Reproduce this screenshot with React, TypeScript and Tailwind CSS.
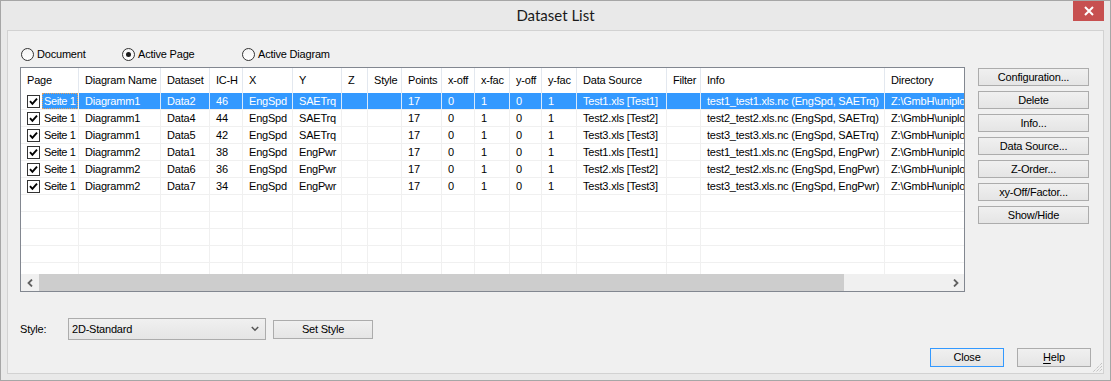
import React from "react";

type Col = { title: string; w: string };

const cols: Col[] = [
  { title: "Page", w: "w-[58px]" },
  { title: "Diagram Name", w: "w-[82px]" },
  { title: "Dataset", w: "w-[49px]" },
  { title: "IC-H", w: "w-[33px]" },
  { title: "X", w: "w-[50px]" },
  { title: "Y", w: "w-[49px]" },
  { title: "Z", w: "w-[26px]" },
  { title: "Style", w: "w-[34px]" },
  { title: "Points", w: "w-[40px]" },
  { title: "x-off", w: "w-[33px]" },
  { title: "x-fac", w: "w-[35px]" },
  { title: "y-off", w: "w-[32px]" },
  { title: "y-fac", w: "w-[35px]" },
  { title: "Data Source", w: "w-[90px]" },
  { title: "Filter", w: "w-[34px]" },
  { title: "Info", w: "w-[184px]" },
  { title: "Directory", w: "w-[130px]" },
];

const rows: string[][] = [
  ["Seite 1", "Diagramm1", "Data2", "46", "EngSpd", "SAETrq", "", "", "17", "0", "1", "0", "1", "Test1.xls [Test1]", "", "test1_test1.xls.nc (EngSpd, SAETrq)", "Z:\\GmbH\\uniplot\\data"],
  ["Seite 1", "Diagramm1", "Data4", "44", "EngSpd", "SAETrq", "", "", "17", "0", "1", "0", "1", "Test2.xls [Test2]", "", "test2_test2.xls.nc (EngSpd, SAETrq)", "Z:\\GmbH\\uniplot\\data"],
  ["Seite 1", "Diagramm1", "Data5", "42", "EngSpd", "SAETrq", "", "", "17", "0", "1", "0", "1", "Test3.xls [Test3]", "", "test3_test3.xls.nc (EngSpd, SAETrq)", "Z:\\GmbH\\uniplot\\data"],
  ["Seite 1", "Diagramm2", "Data1", "38", "EngSpd", "EngPwr", "", "", "17", "0", "1", "0", "1", "Test1.xls [Test1]", "", "test1_test1.xls.nc (EngSpd, EngPwr)", "Z:\\GmbH\\uniplot\\data"],
  ["Seite 1", "Diagramm2", "Data6", "36", "EngSpd", "EngPwr", "", "", "17", "0", "1", "0", "1", "Test2.xls [Test2]", "", "test2_test2.xls.nc (EngSpd, EngPwr)", "Z:\\GmbH\\uniplot\\data"],
  ["Seite 1", "Diagramm2", "Data7", "34", "EngSpd", "EngPwr", "", "", "17", "0", "1", "0", "1", "Test3.xls [Test3]", "", "test3_test3.xls.nc (EngSpd, EngPwr)", "Z:\\GmbH\\uniplot\\data"],
];

const rightButtons = ["Configuration...", "Delete", "Info...", "Data Source...", "Z-Order...", "xy-Off/Factor...", "Show/Hide"];

function Radio({ label, checked }: { label: string; checked?: boolean }) {
  return (
    <div className="flex items-center gap-[3px]">
      <div className="w-[13px] h-[13px] rounded-full border border-[#333333] bg-gradient-to-b from-[#f4f4f4] to-[#ffffff] flex items-center justify-center">
        {checked && <div className="w-[5px] h-[5px] rounded-full bg-[#1a1a1a]" />}
      </div>
      <span>{label}</span>
    </div>
  );
}

function Check() {
  return (
    <div className="w-[13px] h-[13px] border border-[#333333] bg-white flex items-center justify-center shrink-0">
      <svg width="9" height="9" viewBox="0 0 9 9">
        <path d="M1 4.2 L3.4 6.8 L8 1.6" fill="none" stroke="#000" strokeWidth="1.9" />
      </svg>
    </div>
  );
}

function Btn({ label, className = "" }: { label: React.ReactNode; className?: string }) {
  return (
    <div
      className={`flex items-center justify-center border bg-gradient-to-b from-[#f0f0f0] to-[#e5e5e5] ${className}`}
    >
      {label}
    </div>
  );
}

function Table() {
  return (
    <div className="w-[945px] h-[225px] border border-[#828790] bg-white flex flex-col overflow-hidden">
      {/* header */}
      <div className="flex h-[25px] shrink-0">
        {cols.map((c) => (
          <div key={c.title} className={`${c.w} shrink-0 border-r border-[#e3e8ef] pl-[6px] flex items-center whitespace-nowrap`}>
            {c.title}
          </div>
        ))}
      </div>

      {/* rows */}
      <div className="h-[181px] overflow-hidden">
        {rows.map((r, ri) => {
          const sel = ri === 0;
          return (
            <div key={ri} className="flex h-[17px] border-b border-[#f0f0f0]">
              {r.map((v, ci) =>
                ci === 0 ? (
                  <div key={ci} className={`${cols[ci].w} shrink-0 border-r border-[#f0f0f0] flex items-center pl-[6px]`}>
                    <Check />
                    <div
                      className={`ml-[2px] h-full flex-1 flex items-center pl-[2px] whitespace-nowrap tracking-[-0.4px] ${
                        sel ? "bg-[#3399ff] text-white outline-1 outline-dotted outline-[#e0a060] -outline-offset-1" : ""
                      }`}
                    >
                      {v}
                    </div>
                  </div>
                ) : (
                  <div
                    key={ci}
                    className={`${cols[ci].w} shrink-0 border-r pl-[6px] flex items-center whitespace-nowrap overflow-hidden ${
                      sel ? "bg-[#3399ff] text-white border-[#d8e9fb]" : "border-[#f0f0f0]"
                    }`}
                  >
                    {v}
                  </div>
                )
              )}
            </div>
          );
        })}
        {Array.from({ length: 5 }).map((_, i) => (
          <div key={i} className="flex h-[17px] border-b border-[#f0f0f0]">
            {cols.map((c) => (
              <div key={c.title} className={`${c.w} shrink-0 border-r border-[#f0f0f0]`} />
            ))}
          </div>
        ))}
      </div>

      {/* horizontal scrollbar */}
      <div className="flex h-[17px] bg-[#f0f0f0] shrink-0">
        <div className="w-[18px] flex items-center justify-center">
          <svg width="6" height="8" viewBox="0 0 6 8">
            <path d="M5 0.5 L1.5 4 L5 7.5" fill="none" stroke="#606060" strokeWidth="1.8" />
          </svg>
        </div>
        <div className="w-[805px] bg-[#cdcdcd]" />
        <div className="flex-1" />
        <div className="w-[17px] flex items-center justify-center">
          <svg width="6" height="8" viewBox="0 0 6 8">
            <path d="M1 0.5 L4.5 4 L1 7.5" fill="none" stroke="#606060" strokeWidth="1.8" />
          </svg>
        </div>
      </div>
    </div>
  );
}

export default function App() {
  return (
    <div className="w-[1111px] h-[381px] bg-[#e9e9e9] border border-[#a6a6a6] flex flex-col text-[11px] text-black tracking-[-0.2px] font-['Liberation_Sans',Arial,sans-serif]">
      {/* title bar */}
      <div className="h-[29px] shrink-0 flex items-start relative">
        <div className="flex-1 h-full flex items-center justify-center text-[15px] tracking-normal text-[#1a1a1a] font-['Segoe_UI',Lato,'Noto_Sans',sans-serif]">
          Dataset List
        </div>
        <div className="absolute right-[6px] top-0 w-[31px] h-[20px] bg-[#c75050] flex items-center justify-center">
          <svg width="10" height="10" viewBox="0 0 10 10">
            <path d="M1 1 L9 9 M9 1 L1 9" stroke="#fff" strokeWidth="2" />
          </svg>
        </div>
      </div>

      {/* client area */}
      <div className="ml-[6px] w-[1097px] h-[344px] border border-[#d2d2d2] bg-[#f0f0f0] relative flex flex-col">
        <div className="h-[36px] pt-[10px] pl-[13px] flex items-center">
          <div className="w-[101px]">
            <Radio label="Document" />
          </div>
          <div className="w-[120px]">
            <Radio label="Active Page" checked />
          </div>
          <Radio label="Active Diagram" />
        </div>

        <div className="flex pl-[12px]">
          <Table />
          <div className="ml-[13px] mt-[1px] flex flex-col gap-[5px]">
            {rightButtons.map((b) => (
              <Btn key={b} label={b} className="w-[111px] h-[18px] border-[#acacac]" />
            ))}
          </div>
        </div>

        <div className="flex items-center pl-[12px] mt-[26px] h-[22px]">
          <div className="w-[48px]">Style:</div>
          <div className="w-[198px] h-[22px] border border-[#acacac] bg-gradient-to-b from-[#f0f0f0] to-[#e5e5e5] flex items-center pl-[3px] pr-[6px]">
            <span className="flex-1">2D-Standard</span>
            <svg width="8" height="6" viewBox="0 0 8 6">
              <path d="M0.8 1 L4 4.2 L7.2 1" fill="none" stroke="#555" strokeWidth="1.5" />
            </svg>
          </div>
          <Btn label="Set Style" className="ml-[7px] w-[100px] h-[19px] border-[#acacac]" />
        </div>

        <div className="flex justify-end pr-[12px] mt-[8px] gap-[13px]">
          <Btn label="Close" className="w-[74px] h-[19px] border-[#3399ff]" />
          <Btn
            label={
              <span>
                <span className="underline underline-offset-2">H</span>elp
              </span>
            }
            className="w-[74px] h-[19px] border-[#acacac]"
          />
        </div>

        {/* size grip */}
        <svg className="absolute right-0 bottom-0" width="11" height="11" viewBox="0 0 11 11">
          <path d="M10 1 L1 10 M10 4 L4 10 M10 7 L7 10" stroke="#b0b0b0" strokeWidth="1" strokeDasharray="1 1" />
        </svg>
      </div>
    </div>
  );
}
